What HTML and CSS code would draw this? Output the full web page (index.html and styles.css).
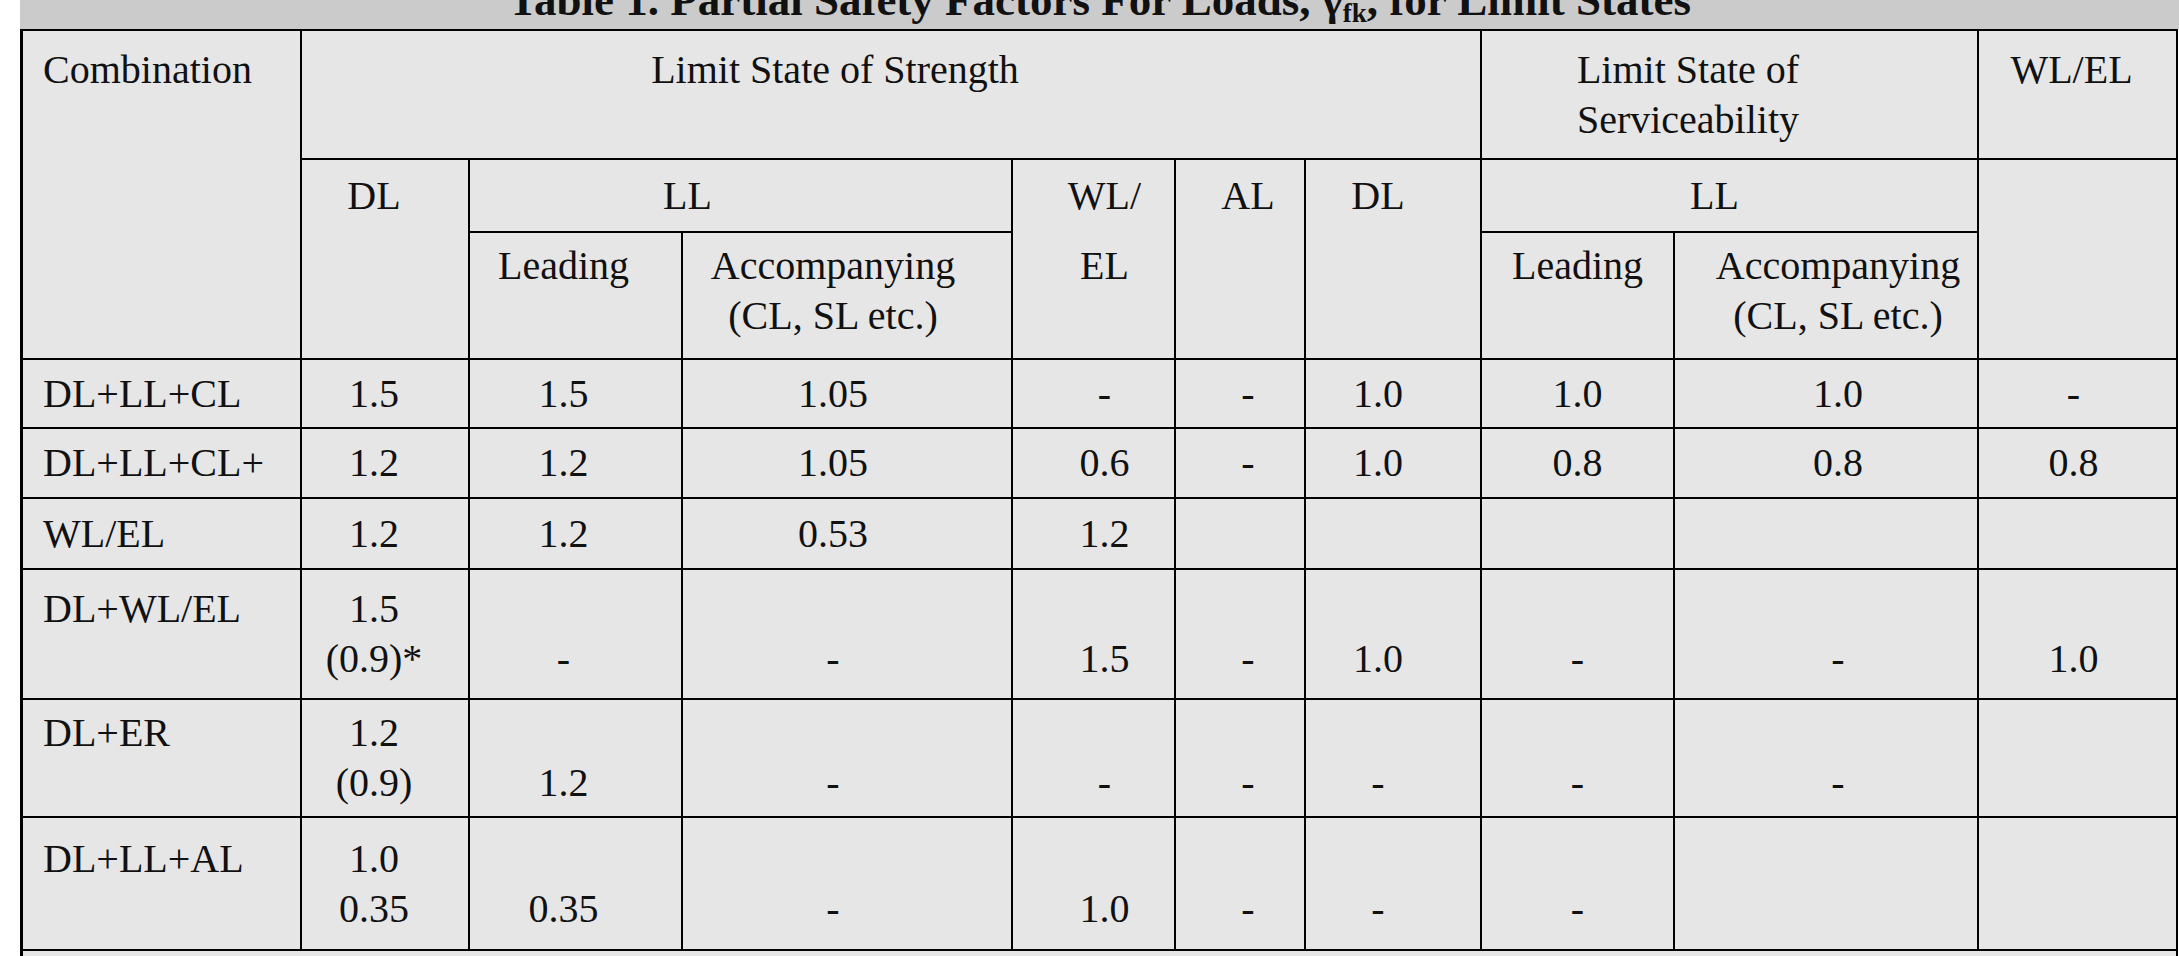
FILE: index.html
```html
<!DOCTYPE html>
<html lang="en">
<head>
<meta charset="utf-8">
<title>Partial Safety Factors For Loads</title>
<link rel="stylesheet" href="styles.css">
</head>
<body>
<div class="page">
  <div class="title"><div class="title-text">Table 1. Partial Safety Factors For Loads, γ<sub>fk</sub>, for Limit States</div></div>
  <div class="tbl">
    <div class="cell lbl hd1 rs3">Combination</div>
    <div class="cell hd1 cs6 strength">Limit State of Strength</div>
    <div class="cell hd1 cs2 service"><span>Limit State of</span><span>Serviceability</span></div>
    <div class="cell hd1 h10">WL/EL</div>

    <div class="cell hd2 rs2 k2">DL</div>
    <div class="cell cs2 ll-s">LL</div>
    <div class="cell hd2 rs2 k5"><span>WL/</span><span class="el">EL</span></div>
    <div class="cell hd2 rs2 k6">AL</div>
    <div class="cell hd2 rs2 k7">DL</div>
    <div class="cell cs2 ll-v">LL</div>
    <div class="cell rs2"></div>

    <div class="cell hd3 k3">Leading</div>
    <div class="cell hd3 k4"><span>Accompanying</span><span>(CL, SL etc.)</span></div>
    <div class="cell hd3 k8">Leading</div>
    <div class="cell hd3 k9"><span>Accompanying</span><span>(CL, SL etc.)</span></div>

    <div class="cell lbl">DL+LL+CL</div>
    <div class="cell k2">1.5</div>
    <div class="cell k3">1.5</div>
    <div class="cell k4">1.05</div>
    <div class="cell k5">-</div>
    <div class="cell k6">-</div>
    <div class="cell k7">1.0</div>
    <div class="cell k8">1.0</div>
    <div class="cell k9">1.0</div>
    <div class="cell k10">-</div>

    <div class="cell lbl">DL+LL+CL+</div>
    <div class="cell k2">1.2</div>
    <div class="cell k3">1.2</div>
    <div class="cell k4">1.05</div>
    <div class="cell k5">0.6</div>
    <div class="cell k6">-</div>
    <div class="cell k7">1.0</div>
    <div class="cell k8">0.8</div>
    <div class="cell k9">0.8</div>
    <div class="cell k10">0.8</div>

    <div class="cell lbl">WL/EL</div>
    <div class="cell k2">1.2</div>
    <div class="cell k3">1.2</div>
    <div class="cell k4">0.53</div>
    <div class="cell k5">1.2</div>
    <div class="cell k6"></div>
    <div class="cell k7"></div>
    <div class="cell k8"></div>
    <div class="cell k9"></div>
    <div class="cell k10"></div>

    <div class="cell lbl l1">DL+WL/EL</div>
    <div class="cell k2"><span>1.5</span><span>(0.9)*</span></div>
    <div class="cell k3 l2">-</div>
    <div class="cell k4 l2">-</div>
    <div class="cell k5 l2">1.5</div>
    <div class="cell k6 l2">-</div>
    <div class="cell k7 l2">1.0</div>
    <div class="cell k8 l2">-</div>
    <div class="cell k9 l2">-</div>
    <div class="cell k10 l2">1.0</div>

    <div class="cell lbl l1">DL+ER</div>
    <div class="cell k2"><span>1.2</span><span>(0.9)</span></div>
    <div class="cell k3 l2">1.2</div>
    <div class="cell k4 l2">-</div>
    <div class="cell k5 l2">-</div>
    <div class="cell k6 l2">-</div>
    <div class="cell k7 l2">-</div>
    <div class="cell k8 l2">-</div>
    <div class="cell k9 l2">-</div>
    <div class="cell k10 l2"></div>

    <div class="cell lbl l1">DL+LL+AL</div>
    <div class="cell k2"><span>1.0</span><span>0.35</span></div>
    <div class="cell k3 l2">0.35</div>
    <div class="cell k4 l2">-</div>
    <div class="cell k5 l2">1.0</div>
    <div class="cell k6 l2">-</div>
    <div class="cell k7 l2">-</div>
    <div class="cell k8 l2">-</div>
    <div class="cell k9 l2"></div>
    <div class="cell k10 l2"></div>

    <div class="cell full"></div>
  </div>
</div>
</body>
</html>
```
FILE: styles.css
```css
html {
  overflow: hidden;
}

body {
  margin: 0;
  background: #ffffff;
  font-family: "Liberation Serif", "Times New Roman", serif;
  color: #111111;
}

.page {
  margin-left: 20px;
}

.title {
  height: 29px;
  overflow: hidden;
  background: #cbcbcb;
  text-align: center;
  font-weight: bold;
  font-size: 45px;
  line-height: 45px;
}

.title-text {
  margin-top: -22px;
}

.title sub {
  font-size: 27px;
  line-height: 0;
  vertical-align: -7px;
}

.tbl {
  display: grid;
  width: max-content;
  grid-template-columns: 277px 166px 211px 328px 161px 128px 174px 191px 302px 197px;
  grid-template-rows: 127px 71px 125px 67px 68px 69px 128px 116px 131px 60px;
  gap: 2px;
  background: #000000;
  border-style: solid;
  border-color: #000000;
  border-width: 2px 2px 0 3px;
  font-size: 40px;
  line-height: 50px;
}

.cell {
  background: #e6e6e6;
  display: flex;
  flex-direction: column;
  justify-content: center;
  text-align: center;
  white-space: nowrap;
}

.rs3 { grid-row: span 3; }
.rs2 { grid-row: span 2; }
.cs6 { grid-column: span 6; }
.cs2 { grid-column: span 2; }
.full { grid-column: 1 / -1; }

.lbl {
  text-align: left;
  padding-left: 20px;
}

.hd1 {
  justify-content: flex-start;
  padding-top: 14px;
}

.hd2 {
  justify-content: flex-start;
  padding-top: 11px;
}

.hd3 {
  justify-content: flex-start;
  padding-top: 8px;
}

.el {
  margin-top: 20px;
}

.strength { padding-right: 112px; }
.service { padding-right: 83px; }
.ll-s { padding-right: 106px; }
.ll-v { padding-right: 30px; }
.h10 { padding-right: 12px; }

.k2 { padding-right: 22px; }
.k3 { padding-right: 24px; }
.k4 { padding-right: 28px; }
.k5 { padding-left: 22px; }
.k6 { padding-left: 16px; }
.k7 { padding-right: 30px; }
.k8 { padding-left: 0; }
.k9 { padding-left: 24px; }
.k10 { padding-right: 8px; }

.l1 { padding-bottom: 50px; }
.l2 { padding-top: 50px; }
```
